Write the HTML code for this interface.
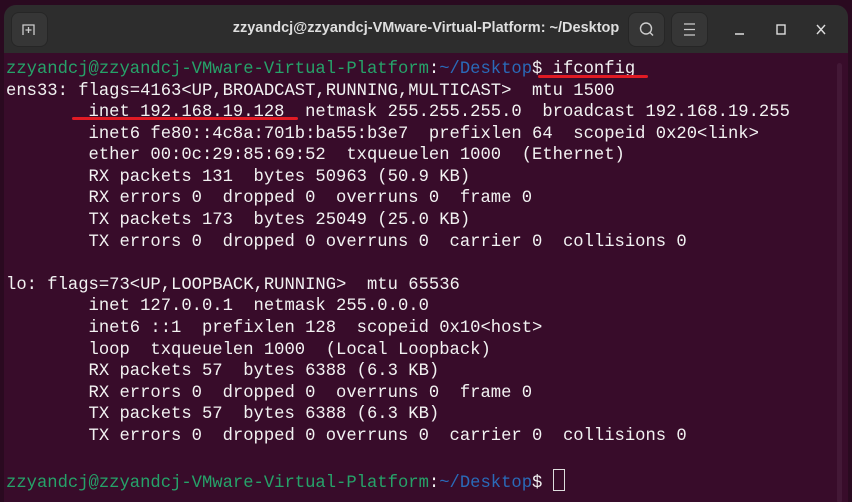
<!DOCTYPE html>
<html><head><meta charset="utf-8"><style>
html,body{margin:0;padding:0;width:852px;height:502px;overflow:hidden;background:#2a0a20;}
.win{position:absolute;left:4px;top:5px;width:844px;height:497px;background:#380c2a;border-radius:12px 12px 0 0;overflow:hidden;}
.tb{position:absolute;left:0;top:0;width:844px;height:48px;background:#2d2d2d;}
.btn{position:absolute;top:8px;width:35px;height:33px;background:#363636;border-radius:7px;box-shadow:0 0 0 1px #262626;}
.title{position:absolute;left:0;width:844px;top:15px;text-align:center;color:#dedede;font:bold 14.5px "Liberation Sans",sans-serif;}
.term{position:absolute;left:2px;top:54px;font:17.2px/21.58px "Liberation Mono",monospace;color:#f2f2f2;white-space:pre;}
.g{color:#26a269;}.b{color:#2a6ab8;}
.ul{position:absolute;height:3px;background:#e01b24;border-radius:2px;}
</style></head><body>
<div class="win">
<div class="tb">
<div class="btn" style="left:8px"><svg width="35" height="33"><path d="M11 22V12h11v10M16.5 14v6M13.5 17h6" stroke="#ccc" stroke-width="1.3" fill="none"/></svg></div>
<div class="title">zzyandcj@zzyandcj-VMware-Virtual-Platform: ~/Desktop</div>
<div class="btn" style="left:625px"><svg width="35" height="33"><circle cx="17" cy="15.5" r="5.5" stroke="#ccc" stroke-width="1.4" fill="none"/><path d="M21 19.5l3 3" stroke="#ccc" stroke-width="1.4"/></svg></div>
<div class="btn" style="left:668px"><svg width="35" height="33"><path d="M12 11h11M12 16.5h11M12 22h11" stroke="#ccc" stroke-width="1.3"/></svg></div>
<svg style="position:absolute;left:720px;top:8px" width="120" height="33"><path d="M11 21h9" stroke="#ddd" stroke-width="1.4"/><rect x="53" y="12" width="8" height="9" stroke="#ddd" stroke-width="1.4" fill="none"/><path d="M93 12l8 9M101 12l-8 9" stroke="#ddd" stroke-width="1.4"/></svg>
</div>
<div style="position:absolute;left:833px;top:58px;width:5px;height:440px;background:#431836;border-radius:3px"></div>
<div class="term"><span class="g">zzyandcj@zzyandcj-VMware-Virtual-Platform</span>:<span class="b">~/Desktop</span>$ ifconfig
ens33: flags=4163&lt;UP,BROADCAST,RUNNING,MULTICAST&gt;  mtu 1500
        inet 192.168.19.128  netmask 255.255.255.0  broadcast 192.168.19.255
        inet6 fe80::4c8a:701b:ba55:b3e7  prefixlen 64  scopeid 0x20&lt;link&gt;
        ether 00:0c:29:85:69:52  txqueuelen 1000  (Ethernet)
        RX packets 131  bytes 50963 (50.9 KB)
        RX errors 0  dropped 0  overruns 0  frame 0
        TX packets 173  bytes 25049 (25.0 KB)
        TX errors 0  dropped 0 overruns 0  carrier 0  collisions 0

lo: flags=73&lt;UP,LOOPBACK,RUNNING&gt;  mtu 65536
        inet 127.0.0.1  netmask 255.0.0.0
        inet6 ::1  prefixlen 128  scopeid 0x10&lt;host&gt;
        loop  txqueuelen 1000  (Local Loopback)
        RX packets 57  bytes 6388 (6.3 KB)
        RX errors 0  dropped 0  overruns 0  frame 0
        TX packets 57  bytes 6388 (6.3 KB)
        TX errors 0  dropped 0 overruns 0  carrier 0  collisions 0

<span class="g">zzyandcj@zzyandcj-VMware-Virtual-Platform</span>:<span class="b">~/Desktop</span>$ <span style="display:inline-block;width:10px;height:20px;border:1px solid #ddd;vertical-align:-4px"></span></div>
</div>
<div class="ul" style="left:538px;top:75px;width:110px"></div>
<div class="ul" style="left:72px;top:117px;width:226px"></div>
</body></html>
